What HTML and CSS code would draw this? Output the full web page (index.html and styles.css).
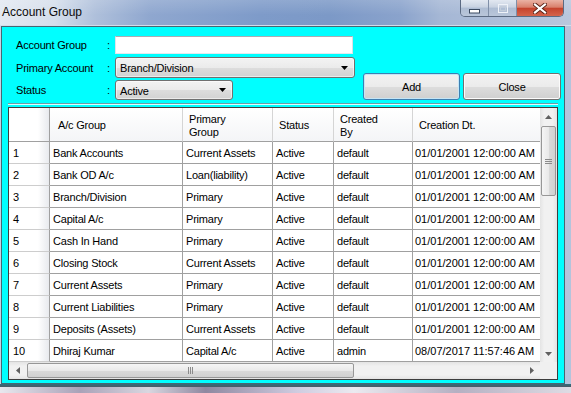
FILE: index.html
```html
<!DOCTYPE html>
<html>
<head>
<meta charset="utf-8">
<title>Account Group</title>
<link rel="stylesheet" href="styles.css">
</head>
<body>
<div class="window">
  <div class="titlebar">
    <span class="title">Account Group</span>
    <div class="caption">
      <div class="cap cap-min"><svg width="12" height="6" viewBox="0 0 12 6"><rect x="0.5" y="1.5" width="10" height="3.5" fill="#fff" stroke="#3b4a60" stroke-width="1"/></svg></div>
      <div class="cap cap-max"><svg width="10" height="9" viewBox="0 0 10 9"><rect x="0.5" y="0.5" width="9" height="8" fill="none" stroke="#eef2f8" stroke-width="1"/><rect x="2.5" y="2.5" width="5" height="4" fill="none" stroke="#c3cdda" stroke-width="1"/></svg></div>
      <div class="cap cap-close"><svg width="14" height="11" viewBox="0 0 14 11"><path d="M2 1.5 L12 9.5 M12 1.5 L2 9.5" stroke="#5a2318" stroke-width="4" stroke-linecap="square"/><path d="M2 1.5 L12 9.5 M12 1.5 L2 9.5" stroke="#fff" stroke-width="2.2" stroke-linecap="square"/></svg></div>
    </div>
  </div>
  <div class="client">
    <div class="form">
      <div class="fields">
        <div class="frow frow-1"><span class="lbl">Account Group</span><span class="colon">:</span><div class="textbox"></div></div>
        <div class="frow frow-2"><span class="lbl">Primary Account</span><span class="colon">:</span><div class="combo combo-wide"><span>Branch/Division</span><svg class="dd" width="7" height="4" viewBox="0 0 7 4"><path d="M0 0 H7 L3.5 4 Z" fill="#000"/></svg></div></div>
        <div class="frow frow-3"><span class="lbl">Status</span><span class="colon">:</span><div class="combo combo-short"><span>Active</span><svg class="dd" width="7" height="4" viewBox="0 0 7 4"><path d="M0 0 H7 L3.5 4 Z" fill="#000"/></svg></div></div>
      </div>
      <div class="buttons">
        <div class="btn btn-default">Add</div>
        <div class="btn btn-close">Close</div>
      </div>
    </div>
    <div class="sep"></div>
    <div class="dgv">
      <div class="dgv-top">
        <div class="dgv-body">
          <div class="row hdr">
            <div class="c corner-h"></div>
            <div class="c h-first">A/c Group</div>
            <div class="c">Primary<br>Group</div>
            <div class="c">Status</div>
            <div class="c">Created<br>By</div>
            <div class="c">Creation Dt.</div>
            <div class="c"></div>
          </div>
          <div class="row"><div class="c rh">1</div><div class="c">Bank Accounts</div><div class="c">Current Assets</div><div class="c">Active</div><div class="c">default</div><div class="c dt">01/01/2001 12:00:00 AM</div><div class="c"></div></div>
          <div class="row"><div class="c rh">2</div><div class="c">Bank OD A/c</div><div class="c">Loan(liability)</div><div class="c">Active</div><div class="c">default</div><div class="c dt">01/01/2001 12:00:00 AM</div><div class="c"></div></div>
          <div class="row"><div class="c rh">3</div><div class="c">Branch/Division</div><div class="c">Primary</div><div class="c">Active</div><div class="c">default</div><div class="c dt">01/01/2001 12:00:00 AM</div><div class="c"></div></div>
          <div class="row"><div class="c rh">4</div><div class="c">Capital A/c</div><div class="c">Primary</div><div class="c">Active</div><div class="c">default</div><div class="c dt">01/01/2001 12:00:00 AM</div><div class="c"></div></div>
          <div class="row"><div class="c rh">5</div><div class="c">Cash In Hand</div><div class="c">Primary</div><div class="c">Active</div><div class="c">default</div><div class="c dt">01/01/2001 12:00:00 AM</div><div class="c"></div></div>
          <div class="row"><div class="c rh">6</div><div class="c">Closing Stock</div><div class="c">Current Assets</div><div class="c">Active</div><div class="c">default</div><div class="c dt">01/01/2001 12:00:00 AM</div><div class="c"></div></div>
          <div class="row"><div class="c rh">7</div><div class="c">Current Assets</div><div class="c">Primary</div><div class="c">Active</div><div class="c">default</div><div class="c dt">01/01/2001 12:00:00 AM</div><div class="c"></div></div>
          <div class="row"><div class="c rh">8</div><div class="c">Current Liabilities</div><div class="c">Primary</div><div class="c">Active</div><div class="c">default</div><div class="c dt">01/01/2001 12:00:00 AM</div><div class="c"></div></div>
          <div class="row"><div class="c rh">9</div><div class="c">Deposits (Assets)</div><div class="c">Current Assets</div><div class="c">Active</div><div class="c">default</div><div class="c dt">01/01/2001 12:00:00 AM</div><div class="c"></div></div>
          <div class="row"><div class="c rh">10</div><div class="c">Dhiraj Kumar</div><div class="c">Capital A/c</div><div class="c">Active</div><div class="c">admin</div><div class="c dt">08/07/2017 11:57:46 AM</div><div class="c"></div></div>
        </div>
        <div class="vscroll">
          <div class="sb-btn"><svg width="7" height="4" viewBox="0 0 7 4"><path d="M0 4 H7 L3.5 0 Z" fill="#606060"/></svg></div>
          <div class="vthumb"><svg width="7" height="5" viewBox="0 0 7 5"><path d="M0 0.5 H7 M0 2.5 H7 M0 4.5 H7" stroke="#8a8a8a" stroke-width="1"/></svg></div>
          <div class="vtrack"></div>
          <div class="sb-btn"><svg width="7" height="4" viewBox="0 0 7 4"><path d="M0 0 H7 L3.5 4 Z" fill="#606060"/></svg></div>
        </div>
      </div>
      <div class="dgv-bottom">
        <div class="hscroll">
          <div class="sb-btn"><svg width="4" height="7" viewBox="0 0 4 7"><path d="M4 0 V7 L0 3.5 Z" fill="#606060"/></svg></div>
          <div class="hthumb"><svg width="5" height="7" viewBox="0 0 5 7"><path d="M0.5 0 V7 M2.5 0 V7 M4.5 0 V7" stroke="#8a8a8a" stroke-width="1"/></svg></div>
          <div class="htrack"></div>
          <div class="sb-btn"><svg width="4" height="7" viewBox="0 0 4 7"><path d="M0 0 V7 L4 3.5 Z" fill="#606060"/></svg></div>
        </div>
        <div class="sb-corner"></div>
      </div>
    </div>
  </div>
  <div class="frame-bottom"></div>
  <div class="behind"></div>
</div>
</body>
</html>
```

FILE: styles.css
```css
* { box-sizing: border-box; }

body {
  margin: 0;
  width: 571px;
  height: 393px;
  overflow: hidden;
  background: linear-gradient(to right, #c7d3e4, #b4c4dc);
  font-family: "Liberation Sans", Arial, sans-serif;
  font-size: 11px;
  letter-spacing: -0.2px;
  color: #000;
}

.window {
  width: 571px;
  height: 393px;
  display: flex;
  flex-direction: column;
}

/* ---------- title bar ---------- */
.titlebar {
  height: 26px;
  flex: none;
  display: flex;
  align-items: flex-start;
  border-bottom: 1px solid #d3dcea;
  background:
    linear-gradient(to bottom, rgba(255,255,255,0.15), rgba(255,255,255,0) 60%),
    linear-gradient(to right, #e4e9f2 0, #d5deeb 55px, #afc0db 95px, #8fa7cf 150px, #7e9bc9 260px, #7c99c7 330px, #8aa3cc 400px, #a5b7d5 440px, #b9c7dd 571px);
}

.title {
  font-size: 12px;
  letter-spacing: 0;
  line-height: 24px;
  padding-left: 2px;
  color: #0c0c0c;
}

.caption {
  margin-left: auto;
  margin-right: 7px;
  height: 17px;
  display: flex;
  border: 1px solid #5b6a82;
  border-top: none;
  border-radius: 0 0 5px 5px;
  overflow: hidden;
}

.cap {
  height: 100%;
  display: flex;
  align-items: center;
  justify-content: center;
}

.cap-min, .cap-max {
  width: 28px;
  border-right: 1px solid #7f8fa8;
  background: linear-gradient(#e2e8f1 0, #c8d2e1 45%, #aebdd3 50%, #b9c6da 100%);
}

.cap-min svg { margin-top: 5px; }

.cap-close {
  width: 46px;
  border-right: none;
  background: linear-gradient(#eab2a4 0, #d9806c 45%, #c5432d 52%, #d5644b 100%);
}

/* ---------- client area ---------- */
.client {
  margin-left: 1px;
  width: 564px;
  height: 358px;
  flex: none;
  border: 1px solid #466773;
  background: #00ffff;
  padding: 9px 0 3px 0;
  display: flex;
  flex-direction: column;
}

.form {
  display: flex;
  align-items: flex-end;
  padding-left: 14px;
}

.frow {
  display: flex;
  align-items: center;
}
.frow-1 { height: 18px; margin-bottom: 3px; }
.frow-2 { height: 21px; margin-bottom: 2px; }
.frow-3 { height: 20px; }

.lbl { width: 91px; }
.colon { width: 8px; }

.textbox {
  width: 238px;
  height: 18px;
  background: #fff;
  border: 1px solid;
  border-color: #abadb3 #dbdfe6 #e3e9ef #e2e3ea;
}

.combo {
  height: 100%;
  border: 1px solid #707070;
  border-radius: 3px;
  background: linear-gradient(#f3f3f3 0, #ebebeb 50%, #dddddd 51%, #d2d2d2 100%);
  box-shadow: inset 0 0 0 1px rgba(255,255,255,0.55);
  display: flex;
  align-items: center;
  justify-content: space-between;
  padding: 0 6px 0 4px;
}
.combo-wide { width: 240px; }
.combo-short { width: 118px; }
.combo span { padding-top: 1px; }

.buttons {
  display: flex;
  gap: 3px;
  margin-left: 8px;
}

.btn {
  height: 27px;
  display: flex;
  align-items: center;
  justify-content: center;
  border: 1px solid #707070;
  border-radius: 3px;
  background: linear-gradient(#f2f2f2 0, #ebebeb 50%, #dddddd 51%, #cfcfcf 100%);
  box-shadow: inset 0 0 0 1px #fbfbfb;
}
.btn-default {
  width: 97px;
  border-color: #3c7fb1;
  box-shadow: inset 0 0 0 1px #c4e5f6;
}
.btn-close { width: 98px; }

.sep {
  flex: none;
  margin: 3px 6px 2px;
  height: 2px;
  border-top: 1px solid #6d9aa6;
  border-bottom: 1px solid #d8ffff;
}

/* ---------- data grid ---------- */
.dgv {
  flex: none;
  margin: 0 6px;
  height: 273px;
  border: 1px solid #3d3d3d;
  background: #fff;
  display: flex;
  flex-direction: column;
}

.dgv-top {
  display: flex;
  height: 254px;
}

.dgv-body {
  width: 531px;
  overflow: hidden;
}

.row {
  display: grid;
  grid-template-columns: 41px 133px 90px 61px 79px 140px 130px;
  width: 674px;
}

.c {
  height: 22px;
  display: flex;
  align-items: center;
  white-space: nowrap;
  overflow: hidden;
  padding-left: 3px;
  border-right: 1px solid #a0a0a0;
  border-bottom: 1px solid #a0a0a0;
}

.hdr .c {
  height: 34px;
  padding: 2px 0 0 6px;
  line-height: 13px;
  border-right-color: #d5d5d5;
  background: linear-gradient(#ffffff, #f4f5f7);
}
.hdr .h-first { padding-left: 8px; }
.hdr .corner-h {
  border-right-color: #a0a0a0;
  background: linear-gradient(to right, #ffffff 72%, #e8eaee);
}

.rh {
  padding-left: 4px;
  border-bottom-color: #cdcdcd;
  background: linear-gradient(to right, #ffffff 72%, #e8eaee);
}

.dt { letter-spacing: 0; padding-left: 2px; }

/* ---------- scrollbars ---------- */
.sb-btn {
  width: 17px;
  height: 17px;
  flex: none;
  display: flex;
  align-items: center;
  justify-content: center;
}

.vscroll {
  width: 17px;
  display: flex;
  flex-direction: column;
  background: linear-gradient(to right, #e4e4e4, #f1f1f1 25%, #f1f1f1 75%, #e4e4e4);
}

.vthumb {
  flex: none;
  margin: 1px 1px 0;
  height: 70px;
  border: 1px solid #979797;
  border-radius: 2px;
  background: linear-gradient(to right, #f5f5f5, #e9e9e9 50%, #dadada 51%, #d1d1d1);
  display: flex;
  align-items: center;
  justify-content: center;
}

.vtrack { flex: 1; }

.dgv-bottom {
  display: flex;
  height: 17px;
}

.hscroll {
  width: 531px;
  display: flex;
  background: linear-gradient(#e4e4e4, #f1f1f1 25%, #f1f1f1 75%, #e4e4e4);
}

.hthumb {
  flex: none;
  width: 327px;
  margin: 1px 0 1px 1px;
  border: 1px solid #979797;
  border-radius: 2px;
  background: linear-gradient(#f5f5f5, #e9e9e9 50%, #dadada 51%, #d1d1d1);
  display: flex;
  align-items: center;
  justify-content: center;
}

.htrack { flex: 1; }

.sb-corner {
  width: 17px;
  background: #f0f0f0;
}

/* ---------- below the window ---------- */
.frame-bottom {
  height: 3px;
  flex: none;
  background: linear-gradient(#2f6f7c, #4d5966);
}

.behind {
  flex: 1;
  background: linear-gradient(to right, #e9e8ee 0, #a9a2b8 14%, #d9d7e0 26%, #8f88a0 36%, #cfcce0 52%, #ebeaf0 62%, #b5b0c2 80%, #dedce4 100%);
}
```
